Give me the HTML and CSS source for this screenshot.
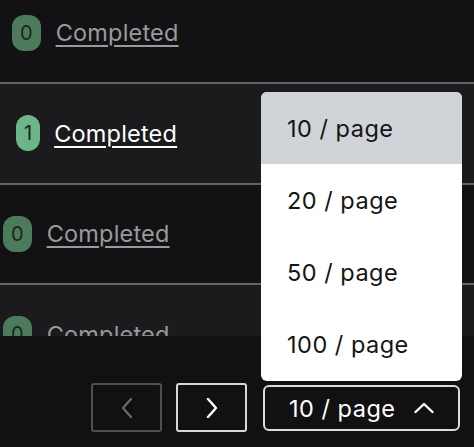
FILE: index.html
```html
<!DOCTYPE html>
<html>
<head>
<meta charset="utf-8">
<link rel="stylesheet" href="styles.css">
</head>
<body>
<div class="app">
  <div class="list">
    <div class="rows">
      <div class="row row-first">
        <span class="badge badge-dim">0</span>
        <a class="link link-dim" href="#">Completed</a>
      </div>
      <div class="row row-hover">
        <span class="badge">1</span>
        <a class="link" href="#">Completed</a>
      </div>
      <div class="row row-shift">
        <span class="badge badge-dim">0</span>
        <a class="link link-dim" href="#">Completed</a>
      </div>
      <div class="row row-shift row-hover">
        <span class="badge badge-dim">0</span>
        <a class="link link-dim" href="#">Completed</a>
      </div>
    </div>
  </div>
  <div class="footer">
    <button class="pg-btn pg-disabled" aria-label="Previous">
      <svg width="12" height="20" viewBox="0 0 12 20"><path d="M10 1 L2 10 L10 19" fill="none" stroke="currentColor" stroke-width="2.2" stroke-linecap="round" stroke-linejoin="round"/></svg>
    </button>
    <button class="pg-btn" aria-label="Next">
      <svg width="12" height="20" viewBox="0 0 12 20"><path d="M2 1 L10 10 L2 19" fill="none" stroke="currentColor" stroke-width="2.4" stroke-linecap="round" stroke-linejoin="round"/></svg>
    </button>
    <div class="select-wrap">
      <ul class="menu">
        <li class="menu-item active">10 / page</li>
        <li class="menu-item">20 / page</li>
        <li class="menu-item">50 / page</li>
        <li class="menu-item">100 / page</li>
      </ul>
      <button class="select">
        <span>10 / page</span>
        <svg width="20" height="12" viewBox="0 0 20 12"><path d="M1.5 10 L10 2 L18.5 10" fill="none" stroke="currentColor" stroke-width="2.4" stroke-linecap="round" stroke-linejoin="round"/></svg>
      </button>
    </div>
  </div>
</div>
</body>
</html>
```
FILE: styles.css
```css
* { box-sizing: border-box; }
html, body {
  margin: 0;
  padding: 0;
  background: #121214;
  font-family: Inter, "Noto Sans", sans-serif;
}
.app {
  width: 474px;
  height: 447px;
  display: flex;
  flex-direction: column;
  overflow: hidden;
}
.list {
  height: 336px;
  overflow: hidden;
  flex: none;
}
.rows {
  margin-top: -16.5px;
}
.row {
  height: 100.5px;
  border-bottom: 2px solid #646466;
  display: flex;
  align-items: center;
  gap: 15px;
  padding-left: 12px;
  background: #121214;
}
.row-hover { background: #1b1b1d; }
.row-first { padding-left: 12px; }
.row.row-hover:not(.row-shift) { padding-left: 16px; gap: 14px; }
.row-shift { padding-left: 3px; }
.badge {
  display: inline-flex;
  align-items: center;
  justify-content: center;
  height: 36px;
  padding: 0 8px;
  border-radius: 12px;
  background: #6db486;
  color: #14261b;
  font-size: 20px;
  line-height: 1;
}
.badge-dim {
  background: #4c7b5c;
  color: #17271d;
}
.link {
  color: #ffffff;
  font-size: 23.5px;
  text-decoration: underline;
  text-decoration-thickness: 2px;
  text-underline-offset: 4px;
  letter-spacing: 0.2px;
}
.link-dim { color: #9a9a9c; }
.footer {
  flex: 1;
  background: #111113;
  display: flex;
  justify-content: flex-end;
  align-items: flex-start;
  padding: 47px 14px 0 0;
  gap: 14px;
}
.pg-btn {
  width: 71px;
  height: 49px;
  background: #111113;
  border: 2px solid #d8d8d8;
  border-radius: 3px;
  color: #ffffff;
  display: flex;
  align-items: center;
  justify-content: center;
  padding: 0;
}
.pg-disabled {
  border-color: #505052;
  color: #68686a;
}
.select-wrap {
  position: relative;
  margin-left: 2px;
}
.select {
  width: 197px;
  height: 46px;
  margin-top: 2px;
  background: #111113;
  border: 2px solid #dcdcdc;
  border-radius: 6px;
  color: #ffffff;
  font-family: Inter, "Noto Sans", sans-serif;
  font-size: 23.5px;
  letter-spacing: 0.5px;
  display: flex;
  align-items: center;
  padding: 0 24px 0 24px;
  justify-content: space-between;
}
.menu {
  position: absolute;
  left: -2px;
  bottom: 50px;
  width: 201px;
  margin: 0;
  padding: 0;
  list-style: none;
  background: #ffffff;
  border-radius: 6px;
  overflow: hidden;
}
.menu-item {
  height: 72.25px;
  display: flex;
  align-items: center;
  padding-left: 26px;
  font-size: 23.5px;
  letter-spacing: 0.5px;
  color: #141414;
}
.menu-item.active {
  background: #d0d3d7;
}
```
